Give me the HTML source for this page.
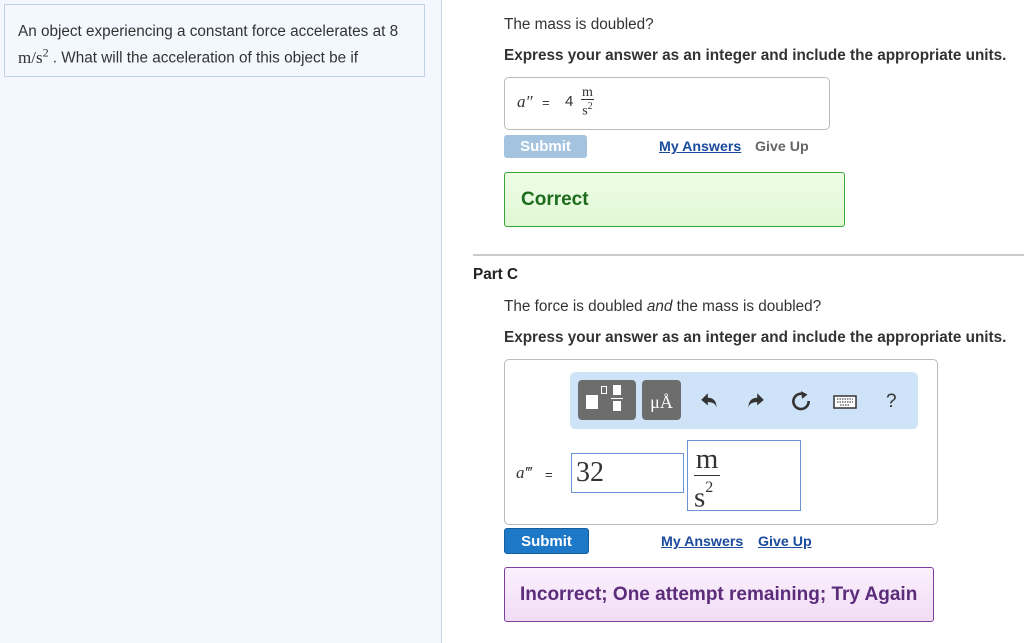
<!DOCTYPE html>
<html><head><meta charset="utf-8"><style>
*{margin:0;padding:0;box-sizing:border-box}
body{width:1024px;height:643px;overflow:hidden;background:#fff;font-family:"Liberation Sans",sans-serif;color:#333;position:relative;font-size:15.3px}
.a{position:absolute;white-space:nowrap}
.left{left:0;top:0;width:442px;height:643px;background:#f3f8fe;border-right:1px solid #c5d3e2}
.qbox{left:4px;top:4px;width:421px;height:73px;border:1px solid #c0d2e6;background:#f3f8fe;padding:17px 13px;font-size:15.3px;line-height:20px}
.serif{font-family:"Liberation Serif",serif}
.b{font-weight:bold}
.btn{border-radius:3px;color:#fff;font-weight:bold;font-size:15px;text-align:center;line-height:23px}
.lnk{color:#1a4a9c;font-weight:bold;text-decoration:underline;font-size:14.2px}
</style></head><body>
<div class="a left"></div>
<div class="a qbox">An object experiencing a constant force accelerates at 8<br><span class="serif" style="font-size:17px">m/s<sup style="font-size:12px">2</sup></span> . What will the acceleration of this object be if</div>

<div class="a" style="left:504px;top:16px">The mass is doubled?</div>
<div class="a b" style="left:504px;top:47px">Express your answer as an integer and include the appropriate units.</div>
<div class="a" style="left:504px;top:77px;width:326px;height:53px;border:1px solid #bbb;border-radius:5px"></div>
<div class="a serif" style="left:517px;top:92px;font-size:17px;font-style:italic">a″</div>
<div class="a" style="left:542px;top:95px;font-size:13px">=</div>
<div class="a" style="left:565px;top:93px;font-size:15px">4</div>
<div class="a serif" style="left:581px;top:86px;font-size:14px;text-align:center;line-height:13px"><div style="border-bottom:1px solid #333;padding:0 1px">m</div><div>s<sup style="font-size:10px">2</sup></div></div>
<div class="a btn" style="left:504px;top:135px;width:83px;height:23px;background:#a3c3de">Submit</div>
<div class="a lnk" style="left:659px;top:139px">My Answers</div>
<div class="a b" style="left:755px;top:139px;color:#666;font-size:14.2px">Give Up</div>
<div class="a" style="left:504px;top:172px;width:341px;height:55px;border:1px solid #3aa63a;border-radius:3px;background:linear-gradient(#eefce6,#e0f8d4)"></div>
<div class="a b" style="left:521px;top:189px;font-size:19px;color:#1d6b1d">Correct</div>

<div class="a" style="left:473px;top:254px;width:551px;height:2px;background:#ccc"></div>
<div class="a b" style="left:473px;top:266px;color:#222">Part C</div>
<div class="a" style="left:504px;top:298px">The force is doubled <i>and</i> the mass is doubled?</div>
<div class="a b" style="left:504px;top:329px">Express your answer as an integer and include the appropriate units.</div>
<div class="a" style="left:504px;top:359px;width:434px;height:166px;border:1px solid #bbb;border-radius:5px"></div>
<div class="a" style="left:570px;top:372px;width:348px;height:57px;background:#cfe3f8;border-radius:5px"></div>
<div class="a" style="left:578px;top:380px;width:58px;height:40px;background:#6d6d6d;border-radius:4px">
 <div class="a" style="left:8px;top:15px;width:12px;height:14px;background:#fff"></div>
 <div class="a" style="left:23px;top:6px;width:6px;height:8px;border:1px solid #fff"></div>
 <div class="a" style="left:35px;top:5px;width:8px;height:10px;background:#fff"></div>
 <div class="a" style="left:33px;top:18px;width:12px;height:1px;background:#fff"></div>
 <div class="a" style="left:35px;top:21px;width:8px;height:10px;background:#fff"></div>
</div>
<div class="a serif" style="left:642px;top:380px;width:39px;height:40px;background:#6d6d6d;border-radius:4px;color:#fff;font-size:18px;text-align:center;line-height:44px">μÅ</div>
<svg class="a" style="left:699px;top:390px" width="22" height="22" viewBox="0 0 20 20"><path d="M8 3 L2 9 L8 14 V11 C12 11 15 12 16 16 C16 10 13 7 8 7 Z" fill="#333"/></svg>
<svg class="a" style="left:744px;top:390px" width="22" height="22" viewBox="0 0 20 20"><path d="M12 3 L18 9 L12 14 V11 C8 11 5 12 4 16 C4 10 7 7 12 7 Z" fill="#333"/></svg>
<svg class="a" style="left:789px;top:389px" width="24" height="24" viewBox="0 0 22 22"><path d="M14 5 A7 7 0 1 0 18 11" fill="none" stroke="#333" stroke-width="2.4"/><path d="M11 2 L17 5 L12 9 Z" fill="#333"/></svg>
<svg class="a" style="left:833px;top:395px" width="24" height="14" viewBox="0 0 24 14"><rect x="1" y="1" width="22" height="12" fill="#fff" stroke="#333" stroke-width="1.5"/><path d="M4 4h16M4 7h16M7 10h10" stroke="#555" stroke-width="1.2" stroke-dasharray="1.5 1"/></svg>
<div class="a" style="left:886px;top:391px;font-size:19px;color:#333">?</div>
<div class="a serif" style="left:516px;top:463px;font-size:17px;font-style:italic">a‴</div>
<div class="a" style="left:545px;top:467px;font-size:13px">=</div>
<div class="a serif" style="left:571px;top:453px;width:113px;height:40px;border:1px solid #6b93d6;font-size:28px;padding:3px 4px">32</div>
<div class="a" style="left:687px;top:440px;width:114px;height:71px;border:1px solid #6b93d6"></div>
<div class="a serif" style="left:694px;top:444px;font-size:29px;line-height:31px;text-align:center">
 <div style="border-bottom:1px solid #333;width:26px">m</div><div style="text-align:left">s<sup style="font-size:16px;position:relative;top:-4px">2</sup></div></div>
<div class="a btn" style="left:504px;top:528px;width:85px;height:26px;background:#1e78c8;border:1px solid #155e9f;line-height:25px">Submit</div>
<div class="a lnk" style="left:661px;top:534px">My Answers</div>
<div class="a lnk" style="left:758px;top:534px">Give Up</div>
<div class="a" style="left:504px;top:567px;width:430px;height:55px;border:1px solid #7a3f9c;border-radius:3px;background:linear-gradient(#fbf0fd,#f1dcf6)"></div>
<div class="a b" style="left:520px;top:584px;font-size:19px;color:#5a2c7a">Incorrect; One attempt remaining; Try Again</div>
</body></html>
